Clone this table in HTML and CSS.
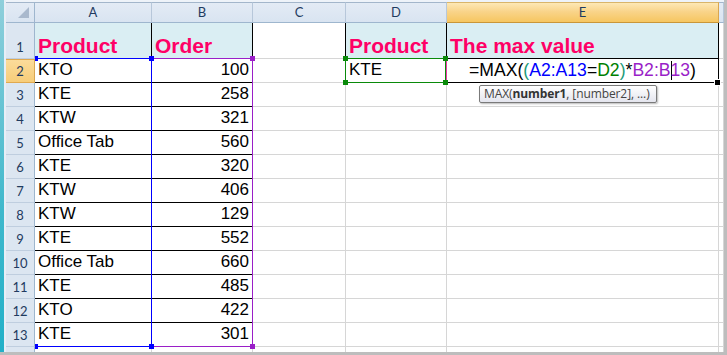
FILE: index.html
```html
<!DOCTYPE html>
<html>
<head>
<meta charset="utf-8">
<link rel="stylesheet" href="styles.css">
</head>
<body>
<div class="window">
  <div class="edge"></div>
  <div class="frame">
    <div class="topline"></div>
    <div class="sheet">
      <div class="hd corner"><svg width="28" height="19" viewBox="0 0 28 19"><polygon points="12,15 23,15 23,4" fill="#a9b9cd"/></svg></div>
      <div class="hd">A</div>
      <div class="hd">B</div>
      <div class="hd">C</div>
      <div class="hd">D</div>
      <div class="hd hd-sel">E</div>
      <div class="hd"></div>

      <div class="rh rh1">1</div>
      <div class="c title bk-r">Product</div>
      <div class="c title bk-r">Order</div>
      <div class="c bk-r"></div>
      <div class="c title bk-r bk-b">Product</div>
      <div class="c title bk-r bk-b">The max value</div>
      <div class="c"></div>

      <div class="rh rh-sel">2</div>
      <div class="c data bk-b">KTO</div>
      <div class="c data num bk-b">100</div>
      <div class="c"></div>
      <div class="c data pink-r">KTE</div>
      <div class="c data formula bk-r bk-b"><span>=MAX(<span class="paren">(</span><span class="ref-a">A2:A13</span>=<span class="ref-d">D2</span><span class="paren">)</span>*<span class="ref-b">B2:B</span><span class="caret"></span><span class="ref-b">13</span>)</span></div>
      <div class="c"></div>

      <div class="rh">3</div>
      <div class="c data bk-b">KTE</div>
      <div class="c data num bk-b">258</div>
      <div class="c"></div><div class="c"></div><div class="c"></div><div class="c"></div>

      <div class="rh">4</div>
      <div class="c data bk-b">KTW</div>
      <div class="c data num bk-b">321</div>
      <div class="c"></div><div class="c"></div><div class="c"></div><div class="c"></div>

      <div class="rh">5</div>
      <div class="c data bk-b">Office Tab</div>
      <div class="c data num bk-b">560</div>
      <div class="c"></div><div class="c"></div><div class="c"></div><div class="c"></div>

      <div class="rh">6</div>
      <div class="c data bk-b">KTE</div>
      <div class="c data num bk-b">320</div>
      <div class="c"></div><div class="c"></div><div class="c"></div><div class="c"></div>

      <div class="rh">7</div>
      <div class="c data bk-b">KTW</div>
      <div class="c data num bk-b">406</div>
      <div class="c"></div><div class="c"></div><div class="c"></div><div class="c"></div>

      <div class="rh">8</div>
      <div class="c data bk-b">KTW</div>
      <div class="c data num bk-b">129</div>
      <div class="c"></div><div class="c"></div><div class="c"></div><div class="c"></div>

      <div class="rh">9</div>
      <div class="c data bk-b">KTE</div>
      <div class="c data num bk-b">552</div>
      <div class="c"></div><div class="c"></div><div class="c"></div><div class="c"></div>

      <div class="rh">10</div>
      <div class="c data bk-b">Office Tab</div>
      <div class="c data num bk-b">660</div>
      <div class="c"></div><div class="c"></div><div class="c"></div><div class="c"></div>

      <div class="rh">11</div>
      <div class="c data bk-b">KTE</div>
      <div class="c data num bk-b">485</div>
      <div class="c"></div><div class="c"></div><div class="c"></div><div class="c"></div>

      <div class="rh">12</div>
      <div class="c data bk-b">KTO</div>
      <div class="c data num bk-b">422</div>
      <div class="c"></div><div class="c"></div><div class="c"></div><div class="c"></div>

      <div class="rh">13</div>
      <div class="c data bk-b">KTE</div>
      <div class="c data num bk-b">301</div>
      <div class="c"></div><div class="c"></div><div class="c"></div><div class="c"></div>

      <div class="rh rh-last"></div>
      <div class="c last"></div><div class="c last"></div><div class="c last"></div><div class="c last"></div><div class="c last"></div><div class="c last"></div>

      <!-- range highlights -->
      <div class="hl hl-purple"></div>
      <div class="hl-line blue-top"></div>
      <div class="hl-line blue-right"></div>
      <div class="hl-line blue-bottom"></div>
      <div class="hl hl-green"></div>

      <span class="sq sq-blue sq-b-tl"></span>
      <span class="sq sq-blue sq-b-bl"></span>
      <span class="sq sq-purple sq-p-tr"></span>
      <span class="sq sq-purple sq-p-br"></span>
      <span class="sq sq-blue sq-b-tr"></span>
      <span class="sq sq-blue sq-b-br"></span>
      <span class="sq sq-green sq-g-tl"></span>
      <span class="sq sq-green sq-g-tr"></span>
      <span class="sq sq-green sq-g-bl"></span>
      <span class="sq sq-green sq-g-br"></span>
      <span class="fill-handle"></span>

      <div class="tip">MAX(<b>number1</b>, [number2], ...)</div>
    </div>
  </div>
</div>
</body>
</html>
```

FILE: styles.css
```css
html, body {
  margin: 0;
  padding: 0;
}
body {
  width: 727px;
  height: 355px;
  overflow: hidden;
  background: #bdbdbd;
}
.window {
  display: flex;
  width: 724px;
  height: 352px;
  background: #fff;
}
.edge {
  width: 4px;
  background: linear-gradient(#8fcfdb, #3fb8cc 60%, #22b0c8);
}
.frame {
  width: 720px;
  padding-left: 2px;
  box-sizing: border-box;
  display: flex;
  flex-direction: column;
  background: #e8eef6;
}
.topline {
  height: 2px;
  background: #eef3f9;
}
.sheet {
  position: relative;
  display: grid;
  grid-template-columns: 29px 117px 101px 93px 101px 272px 5px;
  grid-template-rows: 21px 36px repeat(12, 24px) 5px;
  background: #fff;
  font-family: "Liberation Sans", Arial, sans-serif;
}

/* headers */
.hd {
  box-sizing: border-box;
  background: linear-gradient(#e3ebf5, #d9e4f1);
  border-top: 1px solid #a3b6cb;
  border-right: 1px solid #b7c7da;
  border-bottom: 1px solid #9eb6ce;
  font-family: Lato, "Liberation Sans", sans-serif;
  font-size: 13px;
  line-height: 19px;
  color: #1f3b60;
  display: flex;
  justify-content: center;
  align-items: center;
}
.corner {
  border-right-color: #9eb6ce;
  display: block;
}
.corner svg {
  display: block;
}
.hd-sel {
  background: linear-gradient(#fde8b5, #f9d48a 45%, #f6c660);
  border-right-color: #d9a650;
  border-bottom-color: #c99638;
  border-top-color: #d9b56a;
}
.rh {
  box-sizing: border-box;
  background: #dce6f1;
  border-right: 1px solid #9eb6ce;
  border-bottom: 1px solid #bfcedf;
  font-family: Lato, "Liberation Sans", sans-serif;
  font-size: 13px;
  line-height: 19px;
  color: #1f3b60;
  display: flex;
  justify-content: center;
  align-items: flex-end;
  padding-bottom: 1px;
}
.rh-sel {
  background: linear-gradient(#fbdc9c, #f7cd79);
  border-bottom-color: #e0a94f;
  border-right-color: #d9a650;
  box-shadow: inset 0 1px 0 #e0a94f;
}
.rh-last {
  border-bottom: none;
}

/* cells */
.c {
  box-sizing: border-box;
  border-right: 1px solid #d6d6d6;
  border-bottom: 1px solid #d6d6d6;
  display: flex;
  align-items: flex-end;
  overflow: hidden;
  white-space: nowrap;
}
.c.last {
  border-bottom: none;
}
.bk-r { border-right-color: #000; }
.bk-b { border-bottom-color: #000; }
.pink-r { border-right-color: #e838a8; }

.title {
  background: #daeef3;
  color: #ff0066;
  font-weight: bold;
  font-size: 21px;
  line-height: 24px;
  padding: 0 3px 0 3px;
}
.data {
  color: #000;
  font-size: 17px;
  line-height: 20px;
  padding: 0 3px 2px 3px;
}
.num {
  justify-content: flex-end;
}
.formula {
  justify-content: center;
  font-size: 17.6px;
  padding-left: 0;
  padding-right: 0;
}
.paren { color: #1d9a78; }
.ref-a { color: #0000ff; }
.ref-d { color: #008000; }
.ref-b { color: #9a1fc8; }
.caret {
  display: inline-block;
  width: 1px;
  height: 19px;
  margin-right: -1px;
  background: #000;
  vertical-align: -4px;
}

/* range highlight overlays */
.hl {
  position: absolute;
  box-sizing: border-box;
  border: 1px solid;
}
.hl-purple {
  left: 145px;
  top: 56px;
  width: 102px;
  height: 289px;
  border-color: #9a1fc8;
}
.hl-green {
  left: 339px;
  top: 56px;
  width: 101px;
  height: 25px;
  border-color: #0a8a0a;
}
.hl-line {
  position: absolute;
  background: #0000ff;
}
.blue-top {
  left: 29px;
  top: 56px;
  width: 117px;
  height: 1px;
}
.blue-bottom {
  left: 29px;
  top: 344px;
  width: 117px;
  height: 1px;
}
.blue-right {
  left: 145px;
  top: 56px;
  width: 1px;
  height: 289px;
}
.sq {
  position: absolute;
  width: 5px;
  height: 5px;
}
.sq-blue { background: #0000ff; }
.sq-purple { background: #9a1fc8; }
.sq-green { background: #0a8a0a; }
.sq-b-tl { left: 29px; top: 54px; width: 3px; }
.sq-b-bl { left: 29px; top: 342px; width: 3px; }
.sq-b-tr { left: 143px; top: 54px; }
.sq-b-br { left: 143px; top: 342px; }
.sq-p-tr { left: 244px; top: 54px; }
.sq-p-br { left: 244px; top: 342px; }
.sq-g-tl { left: 337px; top: 54px; }
.sq-g-tr { left: 437px; top: 54px; }
.sq-g-bl { left: 337px; top: 78px; }
.sq-g-br { left: 437px; top: 78px; }
.fill-handle {
  position: absolute;
  left: 709px;
  top: 78px;
  width: 5px;
  height: 5px;
  background: #000;
  box-shadow: 0 0 0 1px #fff;
}

/* function tooltip */
.tip {
  position: absolute;
  left: 473px;
  top: 83px;
  width: 178px;
  height: 18px;
  box-sizing: border-box;
  padding-left: 4px;
  border: 1px solid #7a7a7a;
  border-radius: 2px;
  background: linear-gradient(#ffffff, #e4e5ee);
  box-shadow: 1px 1px 2px rgba(0, 0, 0, 0.28);
  font-family: "Open Sans", "Noto Sans", sans-serif;
  font-size: 12px;
  letter-spacing: -0.1px;
  line-height: 16px;
  color: #444;
  white-space: nowrap;
  overflow: hidden;
}
.tip b {
  color: #333;
}
```
